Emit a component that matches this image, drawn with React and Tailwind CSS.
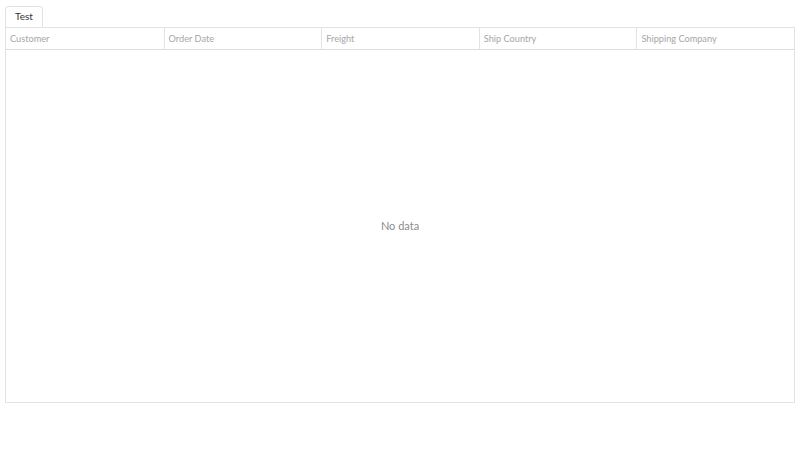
const columns = ["Customer", "Order Date", "Freight", "Ship Country", "Shipping Company"];

export default function App() {
  return (
    <div className="w-[800px] h-[450px] bg-white px-[5px] pt-[6px] font-['Lato',sans-serif]">
      <div className="flex">
        <button className="h-[21px] w-[38px] border border-b-0 border-[#e3e3e3] rounded-t-[4px] bg-white text-[10px] text-[#333] leading-none pb-[2px]">
          Test
        </button>
      </div>
      <div className="h-[376px] flex flex-col border border-[#e3e3e3]">
        <div className="grid grid-cols-5 h-[22px] border-b border-[#dcdcdc]">
          {columns.map((c, i) => (
            <div
              key={c}
              className={`flex items-center px-[4px] text-[9.2px] text-[#a6a6a6] ${i > 0 ? "border-l border-[#e3e3e3]" : ""}`}
            >
              {c}
            </div>
          ))}
        </div>
        <div className="flex-1 flex items-center justify-center">
          <span className="text-[11px] text-[#8c8c8c]">No data</span>
        </div>
      </div>
    </div>
  );
}
